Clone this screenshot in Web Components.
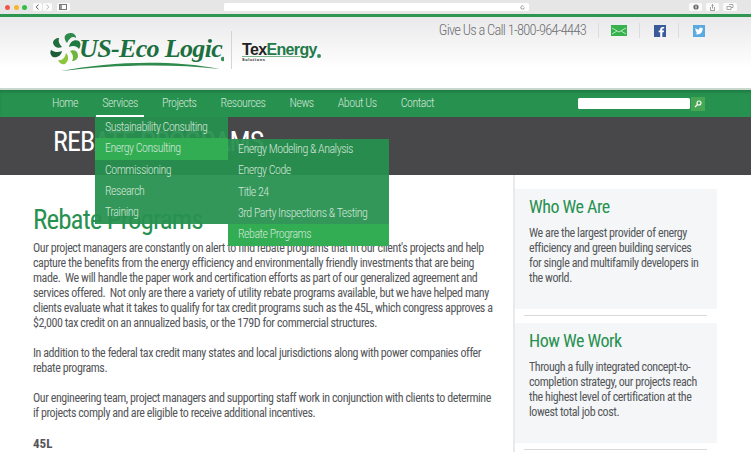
<!DOCTYPE html>
<html>
<head>
<meta charset="utf-8">
<title>Rebate Programs</title>
<style>
    html, body { margin: 0; height: 100%; overflow: hidden; background: #fff; }
    body {
        width: 751px;
        height: 452px;
        font-family: "Roboto Condensed", Roboto, "Liberation Sans", sans-serif;
        color: #55565a;
    }
</style>
</head>
<body>
<browser-bar></browser-bar>
<site-header></site-header>
<site-nav></site-nav>
<page-hero>REBATE PROGRAMS</page-hero>
<page-body>
    <main-copy></main-copy>
    <side-column>
        <side-card heading="Who We Are">We are the largest provider of energy<br>efficiency and green building services<br>for single and multifamily developers in<br>the world.</side-card>
        <side-card heading="How We Work">Through a fully integrated concept-to-<br>completion strategy, our projects reach<br>the highest level of certification at the<br>lowest total job cost.</side-card>
    </side-column>
</page-body>

<script>
class BrowserBar extends HTMLElement {
    constructor() {
        super();
        this.attachShadow({ mode: 'open' });
        this.shadowRoot.innerHTML = `
            <style>
                :host { display: flex; align-items: center; height: 14px; background: #e7e6e7; box-sizing: border-box; padding: 0 14px 0 5px; }
                .dot { width: 5px; height: 5px; border-radius: 50%; margin-right: 3.5px; }
                .btn { height: 8px; background: #fbfbfb; border-radius: 1.5px; display: flex; align-items: center; justify-content: center; }
                #url { width: 305px; margin-left: 154px; height: 8px; background: #fff; border-radius: 1.5px; display: flex; justify-content: flex-end; align-items: center; padding-right: 4px; box-sizing: border-box; }
                #right { margin-left: auto; display: flex; gap: 4px; }
            </style>
            <span class="dot" style="background:#f0584f"></span>
            <span class="dot" style="background:#f5b52d"></span>
            <span class="dot" style="background:#35bc47"></span>
            <span class="btn" style="width:9px;margin-left:2px">
                <svg width="5" height="6" viewBox="0 0 5 6"><path d="M3.5 .5 1.2 3l2.3 2.5" fill="none" stroke="#666"/></svg>
            </span>
            <span class="btn" style="width:9px;margin-left:1px">
                <svg width="5" height="6" viewBox="0 0 5 6"><path d="M1.5 .5 3.8 3 1.5 5.5" fill="none" stroke="#bbb"/></svg>
            </span>
            <span class="btn" style="width:13px;margin-left:5px">
                <svg width="8" height="6" viewBox="0 0 8 6"><rect x=".5" y=".5" width="7" height="5" fill="none" stroke="#777"/><rect x="1" y="1" width="2" height="4" fill="#999"/></svg>
            </span>
            <span id="url">
                <svg width="5" height="5" viewBox="0 0 5 5"><path d="M4.2 2.5a1.7 1.7 0 1 1-.6-1.3" fill="none" stroke="#777" stroke-width=".7"/></svg>
            </span>
            <span id="right">
                <span class="btn" style="width:13px"><svg width="6" height="6" viewBox="0 0 6 6"><circle cx="3" cy="3" r="2.6" fill="#666"/><rect x="2.5" y="1.5" width="1" height="3" fill="#fff"/></svg></span>
                <span class="btn" style="width:13px"><svg width="7" height="7" viewBox="0 0 7 7"><path d="M1.5 3v3.5h4V3M3.5 4.500V.5M2.500 1.500l1-1 1 1" fill="none" stroke="#777" stroke-width=".7"/></svg></span>
                <span class="btn" style="width:14px"><svg width="8" height="6" viewBox="0 0 8 6"><path d="M3 .5h4v3H5M1 2.500h4v3H1z" fill="none" stroke="#888" stroke-width=".7"/></svg></span>
            </span>
        `;
    }
}
customElements.define('browser-bar', BrowserBar);

class SiteHeader extends HTMLElement {
    constructor() {
        super();
        this.attachShadow({ mode: 'open' });
        this.shadowRoot.innerHTML = `
            <style>
                :host {
                    display: flex;
                    justify-content: space-between;
                    height: 74px;
                    box-sizing: border-box;
                    border-top: 3px solid #2d9650;
                    background: linear-gradient(#e9e9eb, #ffffff 72%);
                }
                #logo { display: flex; align-items: flex-start; padding: 14px 0 0 48px; }
                #eco { position: relative; width: 176px; height: 42px; }
                #eco svg { display: block; position: absolute; left: 0; top: 0; }
                #eco span {
                    position: absolute; left: 31px; top: 3px;
                    font: italic bold 26px/30px "Liberation Serif", serif;
                    letter-spacing: -.65px;
                    color: #1c6f3e;
                    white-space: nowrap;
                }
                #rule { width: 1px; height: 38px; background: #d4d6d4; margin: 0 10px 0 7px; }
                #tex { color: #222; font: bold 16px/16px "Liberation Sans", sans-serif; letter-spacing: -.65px; padding-top: 11px; white-space: nowrap; position: relative; }
                #tex b { color: #237a49; font-weight: bold; }
                #tex small { display: block; font-size: 4px; line-height: 5px; letter-spacing: .6px; border-top: 1px solid #7ab48f; margin-top: -2px; width: 58px; }
                #tex i { position: absolute; right: -4px; bottom: 4px; width: 4px; height: 4px; border-radius: 50%; background: #3b8a5a; }
                #contact { display: flex; align-items: center; height: 15px; margin: 6px 46px 0 0; }
                #phone { font-size: 14.5px; font-weight: 300; letter-spacing: -.75px; color: #6f7072; padding-right: 12px; white-space: nowrap; }
                .sep { border-left: 1px solid #dcdcde; height: 15px; display: flex; align-items: center; }
                svg.ic { display: block; }
            </style>
            <div id="logo">
                <div id="eco">
                    <svg width="176" height="42" viewBox="0 0 176 42">
                        <g id="swirl" transform="translate(0 1)">
                            <path d="M19 11C15 6 16 2 22 1c4 0 6 2 6 5-3-2-6-1-9 5z" fill="#2d8a4c"/>
                            <path d="M21 15c1-5 5-8 10-6 2 2 2 5 0 8-2-3-6-4-10-2z" fill="#1f7a40"/>
                            <path d="M22 19c4-2 8 0 8 5 0 3-3 5-6 5 2-3 1-7-2-10z" fill="#6fb63f"/>
                            <path d="M18 21c3 3 3 8-1 11-3 1-6-1-7-4 4 1 7-2 8-7z" fill="#8cc63f"/>
                            <path d="M14 19c-1 5-5 7-9 6-3-2-3-5-2-7 3 2 7 3 11 1z" fill="#1a5f35"/>
                            <path d="M14 15c-4 2-8 0-9-4 0-3 3-5 6-5-1 3 0 6 3 9z" fill="#1f6e3c"/>
                        </g>
                        <path d="M13 40C60 31 120 28 172 38 120 32 60 34 13 40z" fill="#2f8a4c"/>
                        <circle cx="175" cy="28" r="2.200" fill="#3b8a5a"/>
                    </svg>
                    <span>US-Eco Logic</span>
                </div>
                <div id="rule"></div>
                <div id="tex">Tex<b>Energy</b><small>Solutions</small><i></i></div>
            </div>
            <div id="contact">
                <span id="phone">Give Us a Call 1-800-964-4443</span>
                <span class="sep" style="padding:0 12px 0 12px">
                    <svg class="ic" width="16" height="11" viewBox="0 0 16 11"><rect width="16" height="11" fill="#37b24d"/><path d="M1 3l7 4 7-4M1 9l5-3M15 9l-5-3" fill="none" stroke="#d8f2dc" stroke-width=".8"/></svg>
                </span>
                <span class="sep" style="padding:0 12px 0 14px">
                    <svg class="ic" width="12" height="12" viewBox="0 0 12 12"><rect width="12" height="12" fill="#3b5a9a"/><path d="M8.300 12V7.300h1.500l.3-1.800H8.300V4.400c0-.6.2-.9.9-.9h1V1.900H8.700C7 1.900 6.200 2.900 6.200 4.300v1.200H4.700v1.800h1.500V12z" fill="#fff"/></svg>
                </span>
                <span class="sep" style="padding:0 0 0 14px">
                    <svg class="ic" width="12" height="12" viewBox="0 0 12 12"><rect width="12" height="12" fill="#5aa9e0"/><path d="M10.300 3.400c-.3.100-.7.200-1 .3.400-.2.600-.5.800-.9-.3.200-.7.300-1.100.4a1.700 1.700 0 0 0-2.900 1.600c-1.400-.1-2.700-.8-3.500-1.800-.5.800-.2 1.800.5 2.300-.3 0-.5-.1-.8-.2 0 .8.600 1.500 1.400 1.700-.2.100-.5.100-.8 0 .2.700.9 1.200 1.600 1.200-.7.600-1.600.8-2.500.7 2.700 1.700 7.200.6 7.600-4.400.3-.2.500-.5.700-.9z" fill="#fff"/></svg>
                </span>
            </div>
        `;
    }
}
customElements.define('site-header', SiteHeader);

class DropMenu extends HTMLElement {
    constructor() {
        super();
        this.attachShadow({ mode: 'open' });
        this.shadowRoot.innerHTML = `
            <style>
                :host {
                    display: block;
                    position: absolute;
                    background: rgba(39, 145, 80, .94);
                    z-index: 5;
                }
                ::slotted(a) {
                    display: block;
                    height: 21.33px;
                    line-height: 21.33px;
                    padding-left: 10px;
                    color: #cfe5d6;
                    font-size: 12px;
                    font-weight: 300;
                    letter-spacing: -.5px;
                    white-space: nowrap;
                }
                ::slotted(a.on) { background: #32ad54; }
            </style>
            <slot></slot>
        `;
    }
}
customElements.define('drop-menu', DropMenu);

class SiteNav extends HTMLElement {
    constructor() {
        super();
        this.attachShadow({ mode: 'open' });
        this.shadowRoot.innerHTML = `
            <style>
                :host {
                    display: flex;
                    align-items: center;
                    justify-content: space-between;
                    height: 29px;
                    box-sizing: border-box;
                    border-top: 2px solid #c9d8ce;
                    background: #27914f;
                    box-shadow: inset 0 3px 3px -1px #1d7a42;
                    position: relative;
                    padding: 0 46px 0 46px;
                }
                ul { display: flex; gap: 12px; list-style: none; margin: 0; padding: 0; height: 27px; }
                li { padding: 0 6px; line-height: 27px; color: #cfe5d6; font-size: 12px; font-weight: 300; letter-spacing: -.45px; box-sizing: border-box; white-space: nowrap; }
                li.on { border-bottom: 2px solid #fff; }
                #search { display: flex; align-items: center; }
                #search input { width: 112px; height: 11px; padding: 0; border: 0; border-radius: 1.500px; background: #fff; display: block; }
                #search span { width: 14px; height: 14px; margin-left: 1px; background: #46a653; display: flex; align-items: center; justify-content: center; }
                #m1 { left: 95px; top: 27px; width: 133px; }
                #m2 { left: 228px; top: 49px; width: 161px; }
            </style>
            <ul>
                <li>Home</li><li class="on">Services</li><li>Projects</li><li>Resources</li><li>News</li><li>About Us</li><li>Contact</li>
            </ul>
            <div id="search">
                <input type="text" aria-label="Search">
                <span><svg width="8" height="8" viewBox="0 0 8 8"><circle cx="5" cy="3" r="2" fill="none" stroke="#fff" stroke-width="1.100"/><path d="M3.500 4.500 1 7" stroke="#fff" stroke-width="1.300"/></svg></span>
            </div>
            <drop-menu id="m1">
                <a>Sustainability Consulting</a>
                <a class="on">Energy Consulting</a>
                <a>Commissioning</a>
                <a>Research</a>
                <a>Training</a>
            </drop-menu>
            <drop-menu id="m2">
                <a>Energy Modeling &amp; Analysis</a>
                <a>Energy Code</a>
                <a>Title 24</a>
                <a>3rd Party Inspections &amp; Testing</a>
                <a class="on">Rebate Programs</a>
            </drop-menu>
        `;
    }
}
customElements.define('site-nav', SiteNav);

class PageHero extends HTMLElement {
    constructor() {
        super();
        this.attachShadow({ mode: 'open' });
        this.shadowRoot.innerHTML = `
            <style>
                :host {
                    display: block;
                    height: 58px;
                    background: #48484a;
                    color: #fff;
                    font-size: 28px;
                    letter-spacing: -.9px;
                    line-height: 50px;
                    padding-left: 53px;
                    white-space: nowrap;
                }
            </style>
            <slot></slot>
        `;
    }
}
customElements.define('page-hero', PageHero);

class PageBody extends HTMLElement {
    constructor() {
        super();
        this.attachShadow({ mode: 'open' });
        this.shadowRoot.innerHTML = `
            <style>
                :host { display: flex; height: 277px; overflow: hidden; }
            </style>
            <slot></slot>
        `;
    }
}
customElements.define('page-body', PageBody);

class MainCopy extends HTMLElement {
    constructor() {
        super();
        this.attachShadow({ mode: 'open' });
        this.shadowRoot.innerHTML = `
            <style>
                :host { display: block; width: 480px; padding: 30px 0 0 33px; white-space: nowrap; font-size: 12px; letter-spacing: -.43px; line-height: 15px; color: #55565a; }
                h1 { margin: 0 0 6px; font-size: 27px; letter-spacing: -.9px; line-height: 30px; font-weight: 400; color: #27914f; }
                p { margin: 0 0 15px; }
                h4 { margin: 0; font-size: 13px; letter-spacing: 0; color: #55565a; }
            </style>
            <h1>Rebate Programs</h1>
            <p>Our project managers are constantly on alert to find rebate programs that fit our client's projects and help<br>
            capture the benefits from the energy efficiency and environmentally friendly investments that are being<br>
            made.&nbsp; We will handle the paper work and certification efforts as part of our generalized agreement and<br>
            services offered.&nbsp; Not only are there a variety of utility rebate programs available, but we have helped many<br>
            clients evaluate what it takes to qualify for tax credit programs such as the 45L, which congress approves a<br>
            $2,000 tax credit on an annualized basis, or the 179D for commercial structures.</p>
            <p>In addition to the federal tax credit many states and local jurisdictions along with power companies offer<br>
            rebate programs.</p>
            <p>Our engineering team, project managers and supporting staff work in conjunction with clients to determine<br>
            if projects comply and are eligible to receive additional incentives.</p>
            <h4>45L</h4>
        `;
    }
}
customElements.define('main-copy', MainCopy);

class SideColumn extends HTMLElement {
    constructor() {
        super();
        this.attachShadow({ mode: 'open' });
        this.shadowRoot.innerHTML = `
            <style>
                :host { display: block; width: 236px; box-sizing: border-box; border-left: 2px solid #e9eaeb; padding-top: 14px; }
            </style>
            <slot></slot>
        `;
    }
}
customElements.define('side-column', SideColumn);

class SideCard extends HTMLElement {
    constructor() {
        super();
        this.attachShadow({ mode: 'open' });
        this.shadowRoot.innerHTML = `
            <style>
                :host { display: block; width: 202px; }
                #box { height: 120px; box-sizing: border-box; background: #f4f6f8; padding: 8px 0 0 14px; white-space: nowrap; }
                h3 { margin: 0 0 9px; font-size: 18px; letter-spacing: -.5px; line-height: 20px; font-weight: 400; color: #27914f; }
                #txt { font-size: 12px; letter-spacing: -.42px; line-height: 15px; color: #55565a; }
                hr { border: 0; border-top: 1px solid #d8d9db; margin: 6px 10px 7px 9px; }
            </style>
            <div id="box">
                <h3></h3>
                <div id="txt"><slot></slot></div>
            </div>
            <hr>
        `;
    }
    connectedCallback() {
        this.shadowRoot.querySelector('h3').textContent = this.getAttribute('heading');
    }
}
customElements.define('side-card', SideCard);
</script>
</body>
</html>
